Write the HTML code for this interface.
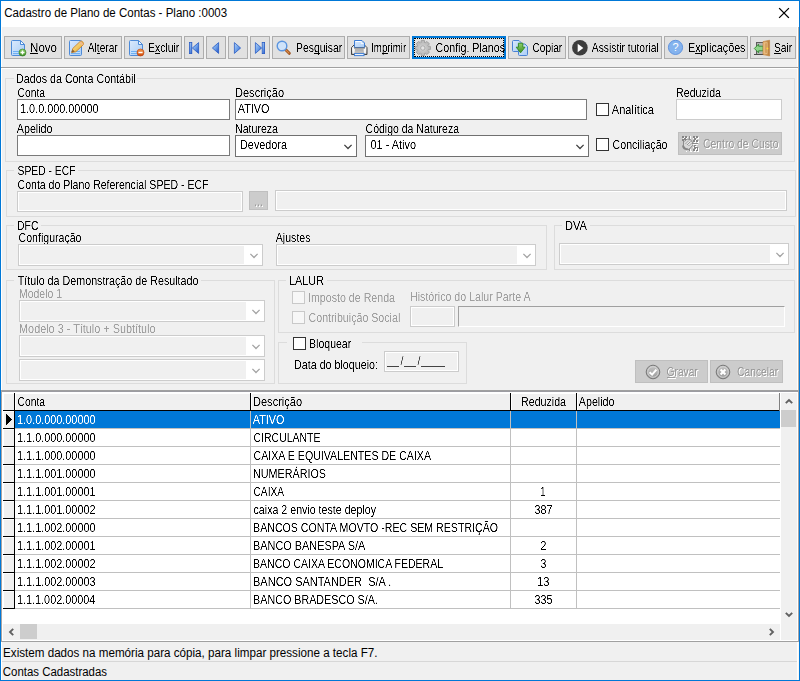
<!DOCTYPE html>
<html lang="pt-BR"><head><meta charset="utf-8"><title>Cadastro de Plano de Contas</title>
<style>
html,body{margin:0;padding:0;}
body{width:800px;height:681px;overflow:hidden;background:#f0f0f0;position:relative;font-family:"Liberation Sans",sans-serif;font-size:12px;}
.b{position:absolute;box-sizing:border-box;}
.t{position:absolute;white-space:pre;line-height:14px;transform-origin:0 0;display:block;filter:url(#crisp);}
.lcd{filter:none;}
.dis{color:#9c9c9c;text-shadow:1px 1px 0 #fff;}
u{text-decoration:underline;text-decoration-thickness:1px;text-underline-offset:1px;text-decoration-skip-ink:none;}
svg{position:absolute;overflow:visible;}
</style></head>
<body>
<svg width="0" height="0" style="position:absolute"><defs>
<linearGradient id="gPage" x1="0" y1="0" x2="1" y2="1"><stop offset="0" stop-color="#dbe9fc"/><stop offset="1" stop-color="#a9cdf6"/></linearGradient>
<linearGradient id="gNav" x1="0" y1="0" x2="1" y2="1"><stop offset="0" stop-color="#b4d2f6"/><stop offset="0.5" stop-color="#6fa2ea"/><stop offset="1" stop-color="#1a4cc4"/></linearGradient>
<linearGradient id="gGreen" x1="0" y1="0" x2="0" y2="1"><stop offset="0" stop-color="#8fd06a"/><stop offset="1" stop-color="#3f8f22"/></linearGradient>
<linearGradient id="gOrange" x1="0" y1="0" x2="0" y2="1"><stop offset="0" stop-color="#f59a4a"/><stop offset="1" stop-color="#d24a0a"/></linearGradient>
<linearGradient id="gPencil" x1="0" y1="0" x2="1" y2="1"><stop offset="0" stop-color="#fbe9a0"/><stop offset="1" stop-color="#e9a825"/></linearGradient>
<linearGradient id="gDoor" x1="0" y1="0" x2="1" y2="0"><stop offset="0" stop-color="#e9b777"/><stop offset="1" stop-color="#b87a36"/></linearGradient>
<linearGradient id="gHelp" x1="0" y1="0" x2="0" y2="1"><stop offset="0" stop-color="#a9cdf8"/><stop offset="1" stop-color="#5f9be8"/></linearGradient>
<linearGradient id="gPrn" x1="0" y1="0" x2="0" y2="1"><stop offset="0" stop-color="#f4f4f4"/><stop offset="0.6" stop-color="#dcdcdc"/><stop offset="1" stop-color="#9a9a9a"/></linearGradient>
<linearGradient id="gGear" x1="0" y1="0" x2="0" y2="1"><stop offset="0" stop-color="#d4d4d4"/><stop offset="1" stop-color="#9a9a9a"/></linearGradient>
<linearGradient id="gDis" x1="0" y1="0" x2="0" y2="1"><stop offset="0" stop-color="#c4c4c4"/><stop offset="1" stop-color="#9a9a9a"/></linearGradient>
<filter id="crisp" x="0" y="0" width="100%" height="100%" color-interpolation-filters="sRGB"><feComponentTransfer><feFuncA type="linear" slope="2" intercept="-0.5"/></feComponentTransfer></filter>
</defs></svg>
<div class="b" style="left:0px;top:0px;width:800px;height:681px;background:#f0f0f0;"></div>
<div class="b" style="left:0px;top:0px;width:800px;height:27px;background:#ffffff;"></div>
<div class="b" style="left:1px;top:27px;width:1px;height:653px;background:#ffffff;"></div>
<div class="b" style="left:797px;top:27px;width:1px;height:653px;background:#ffffff;"></div>
<div class="b" style="left:798px;top:27px;width:1px;height:363px;background:#b4aca4;"></div>
<div class="b" style="left:798px;top:642px;width:1px;height:38px;background:#fbf6f0;"></div>
<div class="b" style="left:0px;top:0px;width:800px;height:1px;background:#0078d7;"></div>
<div class="b" style="left:0px;top:0px;width:1px;height:681px;background:#0078d7;"></div>
<div class="b" style="left:799px;top:0px;width:1px;height:681px;background:#0078d7;"></div>
<div class="b" style="left:0px;top:680px;width:800px;height:1px;background:#0078d7;"></div>
<span class="t lcd" style="left:4px;top:6px;transform:translateX(0.3px) scaleX(0.9599);">Cadastro de Plano de Contas - Plano :0003</span>
<svg style="left:779px;top:8px" width="10" height="10" viewBox="0 0 10 10"><path d="M0.5 0.5 L9.5 9.5 M9.5 0.5 L0.5 9.5" stroke="#000" stroke-width="1.15" stroke-linecap="square" fill="none"/></svg>
<div class="b" style="left:4px;top:36px;width:58px;height:23px;background:#e1e1e1;border:1px solid #adadad;"></div>
<span class="t" style="left:30px;top:41px;transform:translateX(0.05px) scaleX(0.9625);">Novo</span>
<svg style="left:11px;top:40px" width="16" height="17" viewBox="0 0 16 17"><path d="M1.5 0.5 H9.5 L13.5 4.5 V14.5 Q13.5 15.5 12.5 15.5 H1.5 Q0.5 15.5 0.5 14.5 V1.5 Q0.5 0.5 1.5 0.5 Z" fill="url(#gPage)" stroke="#4d8ad8"/><path d="M9.5 0.5 V4.5 H13.5 Z" fill="#f4f9ff" stroke="#4d8ad8" stroke-linejoin="round"/><rect x="2" y="11" width="10" height="3" fill="#6fb0f2"/><rect x="2" y="12" width="10" height="1" fill="#bfe0ff"/><circle cx="11.5" cy="12.5" r="3.5" fill="url(#gGreen)" stroke="#2f7a1c" stroke-width="0.6"/><path d="M11.5 10.5 V14.5 M9.5 12.5 H13.5" stroke="#fff" stroke-width="1.4"/></svg>
<div class="b" style="left:64px;top:36px;width:58px;height:23px;background:#e1e1e1;border:1px solid #adadad;"></div>
<span class="t" style="left:87px;top:41px;transform:translateX(0.8px) scaleX(0.8471);">Alterar</span>
<svg style="left:69px;top:40px" width="16" height="17" viewBox="0 0 16 17"><path d="M1.5 0.5 H11.5 Q12.5 0.5 12.5 1.5 V14.5 Q12.5 15.5 11.5 15.5 H1.5 Q0.5 15.5 0.5 14.5 V1.5 Q0.5 0.5 1.5 0.5 Z" fill="url(#gPage)" stroke="#4d8ad8"/><rect x="2" y="11" width="9" height="3" fill="#6fb0f2"/><rect x="2" y="12" width="9" height="1" fill="#bfe0ff"/><path d="M2.6 12.6 L3.8 8.4 L11.2 1.4 Q12.8 0.6 14 2.2 Q15 3.8 14 5 L6.8 11.8 Z" fill="url(#gPencil)" stroke="#c8791e" stroke-width="0.8"/><path d="M11.3 2.2 L13.6 4.9" stroke="#f0b890" stroke-width="1.8"/><path d="M2.6 12.6 L3.6 9.4 L5.8 11.6 Z" fill="#8a5a2a"/></svg>
<div class="b" style="left:124px;top:36px;width:58px;height:23px;background:#e1e1e1;border:1px solid #adadad;"></div>
<span class="t" style="left:148px;top:41px;transform:translateX(0.05px) scaleX(0.8663);">Excluir</span>
<svg style="left:129px;top:40px" width="16" height="17" viewBox="0 0 16 17"><path d="M1.5 0.5 H9.5 L13.5 4.5 V14.5 Q13.5 15.5 12.5 15.5 H1.5 Q0.5 15.5 0.5 14.5 V1.5 Q0.5 0.5 1.5 0.5 Z" fill="url(#gPage)" stroke="#4d8ad8"/><path d="M9.5 0.5 V4.5 H13.5 Z" fill="#f4f9ff" stroke="#4d8ad8" stroke-linejoin="round"/><rect x="2" y="11" width="10" height="3" fill="#6fb0f2"/><rect x="2" y="12" width="10" height="1" fill="#bfe0ff"/><circle cx="11.5" cy="12.5" r="3.5" fill="url(#gOrange)" stroke="#b83c06" stroke-width="0.6"/><path d="M9.4 12.5 H13.6" stroke="#fff" stroke-width="1.5"/></svg>
<div class="b" style="left:184px;top:36px;width:20px;height:23px;background:#e1e1e1;border:1px solid #adadad;"></div>
<svg style="left:189px;top:42px" width="11" height="12" viewBox="0 0 11 12"><rect x="0.4" y="0.4" width="2.4" height="11.2" fill="url(#gNav)" stroke="#2a5cc4" stroke-width="0.8"/><path d="M9.6 0.6 V11.4 L3.4 6 Z" fill="url(#gNav)" stroke="#2a5cc4" stroke-width="0.8" stroke-linejoin="round"/></svg>
<div class="b" style="left:206px;top:36px;width:20px;height:23px;background:#e1e1e1;border:1px solid #adadad;"></div>
<svg style="left:212px;top:42px" width="8" height="12" viewBox="0 0 8 12"><path d="M6.6 0.6 V11.4 L0.4 6 Z" fill="url(#gNav)" stroke="#2a5cc4" stroke-width="0.8" stroke-linejoin="round"/></svg>
<div class="b" style="left:228px;top:36px;width:20px;height:23px;background:#e1e1e1;border:1px solid #adadad;"></div>
<svg style="left:234px;top:42px" width="8" height="12" viewBox="0 0 8 12"><path d="M0.4 0.6 V11.4 L6.6 6 Z" fill="url(#gNav)" stroke="#2a5cc4" stroke-width="0.8" stroke-linejoin="round"/></svg>
<div class="b" style="left:250px;top:36px;width:20px;height:23px;background:#e1e1e1;border:1px solid #adadad;"></div>
<svg style="left:255px;top:42px" width="11" height="12" viewBox="0 0 11 12"><rect x="7.2" y="0.4" width="2.4" height="11.2" fill="url(#gNav)" stroke="#2a5cc4" stroke-width="0.8"/><path d="M0.4 0.6 V11.4 L6.6 6 Z" fill="url(#gNav)" stroke="#2a5cc4" stroke-width="0.8" stroke-linejoin="round"/></svg>
<div class="b" style="left:272px;top:36px;width:73px;height:23px;background:#e1e1e1;border:1px solid #adadad;"></div>
<span class="t" style="left:296px;top:41px;transform:translateX(0.05px) scaleX(0.8656);">Pesquisar</span>
<svg style="left:276px;top:40px" width="16" height="16" viewBox="0 0 16 16"><path d="M9.5 9.5 L13.3 13.3" stroke="#9a4f1a" stroke-width="3" stroke-linecap="round"/><path d="M9.8 9.8 L13 13" stroke="#d98a4a" stroke-width="1.2" stroke-linecap="round"/><circle cx="6" cy="6" r="4.8" fill="#cfe3fa" stroke="#5b95e0" stroke-width="1.4"/></svg>
<div class="b" style="left:347px;top:36px;width:63px;height:23px;background:#e1e1e1;border:1px solid #adadad;"></div>
<span class="t" style="left:371px;top:41px;transform:translateX(0.05px) scaleX(0.8124);">Imprimir</span>
<svg style="left:351px;top:40px" width="17" height="17" viewBox="0 0 17 17"><path d="M0.5 14.5 V7.6 L3.2 4.8 H13.3 L16 7.6 V14.5 Z" fill="url(#gPrn)" stroke="#444" stroke-width="1"/><rect x="1.5" y="8" width="2" height="5.5" fill="#fff" opacity="0.8"/><rect x="13" y="8" width="2" height="5.5" fill="#fff" opacity="0.8"/><rect x="4" y="9" width="8.5" height="2.6" fill="#b4b4b4"/><path d="M3.5 7.5 V0.5 H11 L13.5 3 V7.5 Z" fill="url(#gPage)" stroke="#3f7fd6"/><path d="M4.5 1.5 H10.2 V3.6 H12.5" fill="none" stroke="#fff" stroke-width="0.9"/><rect x="3" y="7.5" width="11" height="1" fill="#666"/><rect x="3.5" y="13.6" width="9.5" height="2" fill="#fff" stroke="#3f7fd6"/></svg>
<div class="b" style="left:412px;top:36px;width:94px;height:23px;background:#e1e1e1;border:2px solid #0078d7;"></div>
<div class="b" style="left:414px;top:38px;width:90px;height:19px;border:1px dotted #000;"></div>
<span class="t" style="left:435px;top:41px;transform:translateX(0.55px) scaleX(0.8898);">Config. Planos</span>
<svg style="left:415px;top:40px" width="16" height="16" viewBox="0 0 16 16"><g transform="translate(7.8 8)"><rect x="-1.8" y="-7.6" width="3.6" height="4" rx="0.5" transform="rotate(0)" fill="#bcbcbc" stroke="#8e8e8e" stroke-width="0.7"/><rect x="-1.8" y="-7.6" width="3.6" height="4" rx="0.5" transform="rotate(45)" fill="#bcbcbc" stroke="#8e8e8e" stroke-width="0.7"/><rect x="-1.8" y="-7.6" width="3.6" height="4" rx="0.5" transform="rotate(90)" fill="#bcbcbc" stroke="#8e8e8e" stroke-width="0.7"/><rect x="-1.8" y="-7.6" width="3.6" height="4" rx="0.5" transform="rotate(135)" fill="#bcbcbc" stroke="#8e8e8e" stroke-width="0.7"/><rect x="-1.8" y="-7.6" width="3.6" height="4" rx="0.5" transform="rotate(180)" fill="#bcbcbc" stroke="#8e8e8e" stroke-width="0.7"/><rect x="-1.8" y="-7.6" width="3.6" height="4" rx="0.5" transform="rotate(225)" fill="#bcbcbc" stroke="#8e8e8e" stroke-width="0.7"/><rect x="-1.8" y="-7.6" width="3.6" height="4" rx="0.5" transform="rotate(270)" fill="#bcbcbc" stroke="#8e8e8e" stroke-width="0.7"/><rect x="-1.8" y="-7.6" width="3.6" height="4" rx="0.5" transform="rotate(315)" fill="#bcbcbc" stroke="#8e8e8e" stroke-width="0.7"/><circle r="5.4" fill="#c2c2c2"/><circle r="3.6" fill="#cdcdcd"/><circle r="2.2" fill="#e4e4e4" stroke="#a0a0a0" stroke-width="0.8"/></g></svg>
<div class="b" style="left:508px;top:36px;width:58px;height:23px;background:#e1e1e1;border:1px solid #adadad;"></div>
<span class="t" style="left:532px;top:41px;transform:translateX(0.55px) scaleX(0.8396);">Copiar</span>
<svg style="left:512px;top:40px" width="17" height="17" viewBox="0 0 17 17"><path d="M1.5 0.5 H7 L9.5 3 V11.5 H1.5 Q0.5 11.5 0.5 10.5 V1.5 Q0.5 0.5 1.5 0.5 Z" fill="url(#gPage)" stroke="#4a82d4"/><path d="M7.5 4 H13 L15.5 6.5 V14.5 Q15.5 15.5 14.5 15.5 H7.5 Q6.5 15.5 6.5 14.5 V5 Q6.5 4 7.5 4 Z" fill="url(#gPage)" stroke="#4a82d4"/><path d="M6.4 3.2 H10.8 V7.2 H13 L8.6 12.8 L4.2 7.2 H6.4 Z" fill="url(#gGreen)" stroke="#2f8a1c" stroke-width="0.9" stroke-linejoin="round"/></svg>
<div class="b" style="left:568px;top:36px;width:94px;height:23px;background:#e1e1e1;border:1px solid #adadad;"></div>
<span class="t" style="left:591px;top:41px;transform:translateX(0.8px) scaleX(0.8579);">Assistir tutorial</span>
<svg style="left:572px;top:40px" width="16" height="16" viewBox="0 0 16 16"><circle cx="7.9" cy="7.8" r="7.8" fill="#3c3c3c"/><path d="M5.7 3.8 V12.2 L11.3 8 Z" fill="#fff"/></svg>
<div class="b" style="left:664px;top:36px;width:84px;height:23px;background:#e1e1e1;border:1px solid #adadad;"></div>
<span class="t" style="left:688px;top:41px;transform:translateX(0.05px) scaleX(0.8973);">Explicações</span>
<svg style="left:668px;top:40px" width="16" height="16" viewBox="0 0 16 16"><circle cx="7.5" cy="7.4" r="7.1" fill="#84b3ee" stroke="#5a8edc" stroke-width="0.9"/><text x="7.5" y="11.4" text-anchor="middle" font-family="Liberation Sans,sans-serif" font-size="11" fill="#fff">?</text></svg>
<div class="b" style="left:750px;top:36px;width:46px;height:23px;background:#e1e1e1;border:1px solid #adadad;"></div>
<span class="t" style="left:774px;top:41px;transform:translateX(0.05px) scaleX(0.8518);">Sair</span>
<svg style="left:754px;top:40px" width="17" height="17" viewBox="0 0 17 17"><rect x="2.5" y="2.5" width="7" height="12" fill="#b4b4b4" stroke="#5c5c5c"/><rect x="0" y="14" width="9.5" height="1" fill="#4a4a4a"/><path d="M0.3 8.5 L4.6 4.2 V6.2 H9.2 V10.8 H4.6 V12.8 Z" fill="#8fd48a" stroke="#2e8b2e" stroke-width="0.9" stroke-linejoin="round"/><path d="M9 1.6 L15.6 0.2 V16 L9 14.6 Z" fill="url(#gDoor)" stroke="#c0823c" stroke-width="0.6"/><path d="M10.2 3 L13.2 2.5 V13.6 L10.2 13.2 Z" fill="none" stroke="#f2cf9a" stroke-width="0.6"/><circle cx="13.4" cy="8.5" r="0.9" fill="#ffd83a"/></svg>
<div class="b" style="left:30px;top:53px;width:8px;height:1px;background:#000;"></div>
<div class="b" style="left:97px;top:53px;width:3px;height:1px;background:#000;"></div>
<div class="b" style="left:155px;top:53px;width:5px;height:1px;background:#000;"></div>
<div class="b" style="left:314px;top:53px;width:6px;height:1px;background:#000;"></div>
<div class="b" style="left:382px;top:53px;width:6px;height:1px;background:#000;"></div>
<div class="b" style="left:695px;top:53px;width:6px;height:1px;background:#000;"></div>
<div class="b" style="left:774px;top:53px;width:7px;height:1px;background:#000;"></div>
<div class="b" style="left:1px;top:67px;width:797px;height:1px;background:#a0a0a0;"></div>
<div class="b" style="left:2px;top:68px;width:795px;height:1px;background:#ffffff;"></div>
<div class="b" style="left:5px;top:78px;width:790px;height:84px;border:1px solid #dcdcdc;"></div>
<div class="b" style="left:14px;top:78px;width:123px;height:1px;background:#f0f0f0;"></div>
<span class="t" style="left:16px;top:72px;transform:translateX(0.05px) scaleX(0.8927);">Dados da Conta Contábil</span>
<span class="t" style="left:17px;top:86px;transform:translateX(0.55px) scaleX(0.8566);">Conta</span>
<div class="b" style="left:17px;top:99px;width:213px;height:21px;background:#fff;border:1px solid #7a7a7a;"></div>
<span class="t" style="left:20px;top:102px;transform:translateX(0.05px) scaleX(0.9044);">1.0.0.000.00000</span>
<span class="t" style="left:235px;top:86px;transform:translateX(0.05px) scaleX(0.9175);">Descrição</span>
<div class="b" style="left:235px;top:99px;width:352px;height:21px;background:#fff;border:1px solid #7a7a7a;"></div>
<span class="t" style="left:237px;top:102px;transform:translateX(0.8px) scaleX(0.9022);">ATIVO</span>
<div class="b" style="left:596px;top:103px;width:13px;height:13px;background:#fff;border:1px solid #333;"></div>
<span class="t" style="left:611px;top:103px;transform:translateX(0.8px) scaleX(0.9167);">Analítica</span>
<span class="t" style="left:676px;top:86px;transform:translateX(0.05px) scaleX(0.8864);">Reduzida</span>
<div class="b" style="left:676px;top:99px;width:106px;height:21px;background:#fff;border:1px solid #cccccc;"></div>
<span class="t" style="left:16px;top:122px;transform:translateX(0.8px) scaleX(0.8916);">Apelido</span>
<div class="b" style="left:17px;top:135px;width:213px;height:21px;background:#fff;border:1px solid #7a7a7a;"></div>
<span class="t" style="left:235px;top:122px;transform:translateX(0.05px) scaleX(0.8818);">Natureza</span>
<div class="b" style="left:235px;top:135px;width:122px;height:22px;background:#fff;border:1px solid #707070;"></div>
<svg style="left:344px;top:144px" width="8" height="6" viewBox="0 0 8 6"><path d="M0.4 0.9 L4 4.5 L7.6 0.9" stroke="#404040" stroke-width="1.3" fill="none"/></svg>
<span class="t" style="left:240px;top:138px;transform:translateX(0.05px) scaleX(0.9022);">Devedora</span>
<span class="t" style="left:365px;top:122px;transform:translateX(0.55px) scaleX(0.8755);">Código da Natureza</span>
<div class="b" style="left:365px;top:135px;width:224px;height:22px;background:#fff;border:1px solid #707070;"></div>
<svg style="left:576px;top:144px" width="8" height="6" viewBox="0 0 8 6"><path d="M0.4 0.9 L4 4.5 L7.6 0.9" stroke="#404040" stroke-width="1.3" fill="none"/></svg>
<span class="t" style="left:370px;top:138px;transform:translateX(0.55px) scaleX(0.9083);">01 - Ativo</span>
<div class="b" style="left:596px;top:138px;width:13px;height:13px;background:#fff;border:1px solid #333;"></div>
<span class="t" style="left:612px;top:138px;transform:translateX(0.55px) scaleX(0.8856);">Conciliação</span>
<div class="b" style="left:678px;top:132px;width:104px;height:23px;background:#cccccc;border:1px solid #bfbfbf;"></div>
<svg style="left:682px;top:136px" width="16" height="16" viewBox="0 0 16 16"><rect x="1" y="1" width="2" height="2" fill="#ffffff"/><rect x="0" y="0" width="2" height="2" fill="#858585"/><rect x="4" y="1" width="2" height="2" fill="#ffffff"/><rect x="3" y="0" width="2" height="2" fill="#858585"/><rect x="1" y="4" width="2" height="2" fill="#ffffff"/><rect x="0" y="3" width="2" height="2" fill="#858585"/><rect x="3" y="3" width="2" height="2" fill="#ffffff"/><rect x="2" y="2" width="2" height="2" fill="#858585"/><rect x="12" y="1" width="2" height="2" fill="#ffffff"/><rect x="11" y="0" width="2" height="2" fill="#858585"/><rect x="15" y="1" width="2" height="2" fill="#ffffff"/><rect x="14" y="0" width="2" height="2" fill="#858585"/><rect x="13" y="3" width="2" height="2" fill="#ffffff"/><rect x="12" y="2" width="2" height="2" fill="#858585"/><rect x="15" y="5" width="2" height="2" fill="#ffffff"/><rect x="14" y="4" width="2" height="2" fill="#858585"/><rect x="12" y="5" width="2" height="2" fill="#ffffff"/><rect x="11" y="4" width="2" height="2" fill="#858585"/><rect x="13" y="10" width="2" height="2" fill="#ffffff"/><rect x="12" y="9" width="2" height="2" fill="#858585"/><rect x="15" y="12" width="2" height="2" fill="#ffffff"/><rect x="14" y="11" width="2" height="2" fill="#858585"/><rect x="12" y="14" width="2" height="2" fill="#ffffff"/><rect x="11" y="13" width="2" height="2" fill="#858585"/><rect x="15" y="14" width="2" height="2" fill="#ffffff"/><rect x="14" y="13" width="2" height="2" fill="#858585"/><rect x="13" y="12" width="2" height="2" fill="#ffffff"/><rect x="12" y="11" width="2" height="2" fill="#858585"/><rect x="2" y="1" width="1" height="1" fill="#ffffff"/><rect x="5" y="1" width="1" height="1" fill="#ffffff"/><rect x="13" y="1" width="1" height="1" fill="#ffffff"/><rect x="13" y="5" width="1" height="1" fill="#ffffff"/><rect x="11" y="2" width="1" height="1" fill="#ffffff"/><rect x="13" y="10" width="1" height="1" fill="#ffffff"/><rect x="11" y="11" width="1" height="1" fill="#ffffff"/><rect x="13" y="14" width="1" height="1" fill="#ffffff"/><rect x="4" y="15" width="1" height="1" fill="#ffffff"/><rect x="9" y="15" width="1" height="1" fill="#ffffff"/><path d="M1.5 5 V10 L4 13.5 H7 L10.5 9.5 V6.5 L8.5 3.5 L5 3 L3 5 Z" fill="#d8d8d8" stroke="#858585" stroke-width="0.9"/><path d="M3.5 8 L7 4.5 M5 9 L8.5 5.5 M6.5 10 L9.5 7" stroke="#858585" stroke-width="0.8"/><path d="M4 7 L6.5 4.5 M5.8 8.2 L8.2 5.8" stroke="#fff" stroke-width="0.8" transform="translate(0.8 0.8)"/><path d="M0 9.5 Q0.5 14 5 14 L6.5 12.5 Q3 12.5 1.5 9.5 Z" fill="#858585"/><path d="M10.5 7.5 H16" stroke="#858585" stroke-width="0.9"/><path d="M10.5 8.5 H16" stroke="#fff" stroke-width="0.9"/><path d="M7.5 0 V3.5 M7.5 12.5 V15" stroke="#858585" stroke-width="0.9"/><path d="M8.5 0 V3 M8.5 13 V16" stroke="#fff" stroke-width="0.9"/></svg>
<span class="t dis" style="left:703px;top:137px;transform:translateX(0.05px) scaleX(0.8633);">Centro de Custo</span>
<div class="b" style="left:6px;top:170px;width:790px;height:47px;border:1px solid #dcdcdc;"></div>
<div class="b" style="left:14px;top:170px;width:64px;height:1px;background:#f0f0f0;"></div>
<span class="t" style="left:17px;top:164px;transform:translateX(0.55px) scaleX(0.8604);">SPED - ECF</span>
<span class="t" style="left:17px;top:178px;transform:translateX(0.55px) scaleX(0.8782);">Conta do Plano Referencial SPED - ECF</span>
<div class="b" style="left:17px;top:191px;width:226px;height:21px;background:#f0f0f0;border:1px solid #cccccc;"></div>
<div class="b" style="left:18px;top:192px;width:224px;height:19px;border:1px solid #ffffff;"></div>
<div class="b" style="left:249px;top:191px;width:19px;height:19px;background:#cccccc;border:1px solid #bfbfbf;"></div>
<span class="t dis" style="left:254px;top:195px;transform:translateX(0.05px) scaleX(0.8853);">...</span>
<div class="b" style="left:275px;top:190px;width:512px;height:21px;background:#f0f0f0;border:1px solid #cccccc;"></div>
<div class="b" style="left:276px;top:191px;width:510px;height:19px;border:1px solid #ffffff;"></div>
<div class="b" style="left:6px;top:225px;width:541px;height:45px;border:1px solid #dcdcdc;"></div>
<div class="b" style="left:14px;top:225px;width:27px;height:1px;background:#f0f0f0;"></div>
<span class="t" style="left:17px;top:219px;transform:translateX(0.05px) scaleX(0.8702);">DFC</span>
<span class="t" style="left:18px;top:231px;transform:translateX(0.55px) scaleX(0.8817);">Configuração</span>
<div class="b" style="left:18px;top:244px;width:245px;height:22px;background:#f0f0f0;border:1px solid #cccccc;"></div>
<div class="b" style="left:19px;top:245px;width:243px;height:20px;border:1px solid #ffffff;"></div>
<div class="b" style="left:244px;top:245px;width:18px;height:20px;background:#ffffff;"></div>
<svg style="left:250px;top:253px" width="8" height="6" viewBox="0 0 8 6"><path d="M0.4 0.9 L4 4.5 L7.6 0.9" stroke="#a4a4a4" stroke-width="1.3" fill="none"/></svg>
<span class="t" style="left:275px;top:231px;transform:translateX(0.8px) scaleX(0.8814);">Ajustes</span>
<div class="b" style="left:276px;top:244px;width:260px;height:22px;background:#f0f0f0;border:1px solid #cccccc;"></div>
<div class="b" style="left:277px;top:245px;width:258px;height:20px;border:1px solid #ffffff;"></div>
<div class="b" style="left:517px;top:245px;width:18px;height:20px;background:#ffffff;"></div>
<svg style="left:523px;top:253px" width="8" height="6" viewBox="0 0 8 6"><path d="M0.4 0.9 L4 4.5 L7.6 0.9" stroke="#a4a4a4" stroke-width="1.3" fill="none"/></svg>
<div class="b" style="left:554px;top:225px;width:241px;height:45px;border:1px solid #dcdcdc;"></div>
<div class="b" style="left:562px;top:225px;width:28px;height:1px;background:#f0f0f0;"></div>
<span class="t" style="left:565px;top:219px;transform:translateX(0.05px) scaleX(0.9219);">DVA</span>
<div class="b" style="left:559px;top:243px;width:230px;height:22px;background:#f0f0f0;border:1px solid #cccccc;"></div>
<div class="b" style="left:560px;top:244px;width:228px;height:20px;border:1px solid #ffffff;"></div>
<div class="b" style="left:770px;top:244px;width:18px;height:20px;background:#ffffff;"></div>
<svg style="left:776px;top:252px" width="8" height="6" viewBox="0 0 8 6"><path d="M0.4 0.9 L4 4.5 L7.6 0.9" stroke="#a4a4a4" stroke-width="1.3" fill="none"/></svg>
<div class="b" style="left:6px;top:280px;width:269px;height:104px;border:1px solid #dcdcdc;"></div>
<div class="b" style="left:14px;top:280px;width:187px;height:1px;background:#f0f0f0;"></div>
<span class="t" style="left:17px;top:274px;transform:translateX(0.8px) scaleX(0.8940);">Título da Demonstração de Resultado</span>
<span class="t" style="left:19px;top:287px;color:#a0a0a0;transform:translateX(0.05px) scaleX(0.8701);">Modelo 1</span>
<div class="b" style="left:19px;top:300px;width:246px;height:22px;background:#f0f0f0;border:1px solid #cccccc;"></div>
<div class="b" style="left:20px;top:301px;width:244px;height:20px;border:1px solid #ffffff;"></div>
<div class="b" style="left:246px;top:301px;width:18px;height:20px;background:#ffffff;"></div>
<svg style="left:252px;top:309px" width="8" height="6" viewBox="0 0 8 6"><path d="M0.4 0.9 L4 4.5 L7.6 0.9" stroke="#a4a4a4" stroke-width="1.3" fill="none"/></svg>
<span class="t" style="left:19px;top:322px;color:#a0a0a0;transform:translateX(0.05px) scaleX(0.9044);">Modelo 3 - Título + Subtítulo</span>
<div class="b" style="left:19px;top:335px;width:246px;height:22px;background:#f0f0f0;border:1px solid #cccccc;"></div>
<div class="b" style="left:20px;top:336px;width:244px;height:20px;border:1px solid #ffffff;"></div>
<div class="b" style="left:246px;top:336px;width:18px;height:20px;background:#ffffff;"></div>
<svg style="left:252px;top:344px" width="8" height="6" viewBox="0 0 8 6"><path d="M0.4 0.9 L4 4.5 L7.6 0.9" stroke="#a4a4a4" stroke-width="1.3" fill="none"/></svg>
<div class="b" style="left:19px;top:359px;width:246px;height:22px;background:#f0f0f0;border:1px solid #cccccc;"></div>
<div class="b" style="left:20px;top:360px;width:244px;height:20px;border:1px solid #ffffff;"></div>
<div class="b" style="left:246px;top:360px;width:18px;height:20px;background:#ffffff;"></div>
<svg style="left:252px;top:368px" width="8" height="6" viewBox="0 0 8 6"><path d="M0.4 0.9 L4 4.5 L7.6 0.9" stroke="#a4a4a4" stroke-width="1.3" fill="none"/></svg>
<div class="b" style="left:278px;top:280px;width:517px;height:53px;border:1px solid #dcdcdc;"></div>
<div class="b" style="left:286px;top:280px;width:41px;height:1px;background:#f0f0f0;"></div>
<span class="t" style="left:289px;top:274px;transform:translateX(0.05px) scaleX(0.9037);">LALUR</span>
<div class="b" style="left:292px;top:291px;width:13px;height:13px;background:#f7f7f7;border:1px solid #c9c9c9;"></div>
<span class="t" style="left:308px;top:291px;color:#a0a0a0;transform:translateX(0.05px) scaleX(0.8867);">Imposto de Renda</span>
<div class="b" style="left:292px;top:311px;width:13px;height:13px;background:#f7f7f7;border:1px solid #c9c9c9;"></div>
<span class="t" style="left:308px;top:311px;color:#a0a0a0;transform:translateX(0.55px) scaleX(0.8869);">Contribuição Social</span>
<span class="t" style="left:410px;top:290px;color:#a0a0a0;transform:translateX(0.05px) scaleX(0.8851);">Histórico do Lalur Parte A</span>
<div class="b" style="left:410px;top:306px;width:45px;height:21px;background:#f0f0f0;border:1px solid #cccccc;"></div>
<div class="b" style="left:411px;top:307px;width:43px;height:19px;border:1px solid #ffffff;"></div>
<div class="b" style="left:458px;top:306px;width:327px;height:21px;background:#f0f0f0;border:1px solid #a0a0a0;border-right-color:#fff;border-bottom-color:#fff;"></div>
<div class="b" style="left:278px;top:342px;width:189px;height:42px;border:1px solid #dcdcdc;"></div>
<div class="b" style="left:287px;top:342px;width:75px;height:1px;background:#f0f0f0;"></div>
<div class="b" style="left:293px;top:337px;width:13px;height:13px;background:#fff;border:1px solid #333;"></div>
<span class="t" style="left:309px;top:337px;transform:translateX(0.05px) scaleX(0.8783);">Bloquear</span>
<span class="t" style="left:294px;top:358px;transform:translateX(0.05px) scaleX(0.8925);">Data do bloqueio:</span>
<div class="b" style="left:384px;top:351px;width:75px;height:21px;background:#f0f0f0;border:1px solid #cccccc;"></div>
<div class="b" style="left:385px;top:352px;width:73px;height:19px;border:1px solid #ffffff;"></div>
<span class="t" style="left:387px;top:353px;color:#444;transform:scaleX(0.8994);">__<span style="position:relative;top:1px;margin:0 0.6px 0 1.6px">/</span>__<span style="position:relative;top:1px;margin:0 0.6px 0 1.6px">/</span>____</span>
<div class="b" style="left:635px;top:360px;width:73px;height:23px;background:#cccccc;border:1px solid #bfbfbf;"></div>
<svg style="left:645px;top:364px" width="16" height="16" viewBox="0 0 16 16"><circle cx="8" cy="8" r="6.8" fill="url(#gDis)" stroke="#787878" stroke-width="1"/><circle cx="8" cy="8" r="5.3" fill="none" stroke="#dadada" stroke-width="0.8"/><path d="M4.6 8.2 L7.1 10.6 L11.4 5.6" stroke="#fff" stroke-width="2" fill="none"/></svg>
<div class="b" style="left:668px;top:378px;width:8px;height:1px;background:#ffffff;"></div>
<div class="b" style="left:667px;top:377px;width:8px;height:1px;background:#9c9c9c;"></div>
<span class="t dis" style="left:666px;top:365px;transform:translateX(0.55px) scaleX(0.8501);">Gravar</span>
<div class="b" style="left:710px;top:360px;width:73px;height:23px;background:#cccccc;border:1px solid #bfbfbf;"></div>
<svg style="left:715px;top:364px" width="16" height="16" viewBox="0 0 16 16"><circle cx="8" cy="8" r="6.8" fill="url(#gDis)" stroke="#787878" stroke-width="1"/><circle cx="8" cy="8" r="5.3" fill="none" stroke="#dadada" stroke-width="0.8"/><path d="M5.6 5.6 L10.4 10.4 M10.4 5.6 L5.6 10.4" stroke="#fff" stroke-width="2.1" fill="none"/></svg>
<span class="t dis" style="left:737px;top:365px;transform:translateX(0.05px) scaleX(0.8576);">Cancelar</span>
<div class="b" style="left:1px;top:390px;width:797px;height:1px;background:#a0a0a0;"></div>
<div class="b" style="left:1px;top:391px;width:798px;height:251px;background:#9c9ca2;"></div>
<div class="b" style="left:1px;top:390px;width:1px;height:252px;background:#aaa4a2;"></div>
<div class="b" style="left:798px;top:390px;width:1px;height:252px;background:#aaa4a2;"></div>
<div class="b" style="left:2px;top:392px;width:796px;height:249px;background:#ffffff;"></div>
<div class="b" style="left:3px;top:393px;width:777px;height:17px;background:#f0f0f0;"></div>
<div class="b" style="left:3px;top:393px;width:777px;height:1px;background:#ffffff;"></div>
<div class="b" style="left:3px;top:393px;width:1px;height:17px;background:#ffffff;"></div>
<div class="b" style="left:15px;top:393px;width:1px;height:17px;background:#ffffff;"></div>
<div class="b" style="left:251px;top:393px;width:1px;height:17px;background:#ffffff;"></div>
<div class="b" style="left:511px;top:393px;width:1px;height:17px;background:#ffffff;"></div>
<div class="b" style="left:577px;top:393px;width:1px;height:17px;background:#ffffff;"></div>
<div class="b" style="left:3px;top:410px;width:777px;height:1px;background:#000;"></div>
<div class="b" style="left:14px;top:393px;width:1px;height:18px;background:#000;"></div>
<div class="b" style="left:250px;top:393px;width:1px;height:18px;background:#000;"></div>
<div class="b" style="left:510px;top:393px;width:1px;height:18px;background:#000;"></div>
<div class="b" style="left:576px;top:393px;width:1px;height:18px;background:#000;"></div>
<div class="b" style="left:779px;top:393px;width:1px;height:18px;background:#808080;"></div>
<span class="t" style="left:17px;top:395px;transform:translateX(0.55px) scaleX(0.8566);">Conta</span>
<span class="t" style="left:253px;top:395px;transform:translateX(0.05px) scaleX(0.9175);">Descrição</span>
<span class="t" style="left:521px;top:395px;transform:translateX(0.05px) scaleX(0.8864);">Reduzida</span>
<span class="t" style="left:578px;top:395px;transform:translateX(0.8px) scaleX(0.8916);">Apelido</span>
<div class="b" style="left:3px;top:411px;width:11px;height:17px;background:#f0f0f0;border-top:1px solid #fff;border-left:1px solid #fff;"></div>
<div class="b" style="left:3px;top:428px;width:12px;height:1px;background:#000;"></div>
<div class="b" style="left:14px;top:411px;width:1px;height:18px;background:#000;"></div>
<div class="b" style="left:15px;top:411px;width:765px;height:17px;background:#0078d7;"></div>
<svg style="left:6px;top:414px" width="6" height="11" viewBox="0 0 6 11"><path d="M0 0 L6 5.5 L0 11 Z" fill="#000" shape-rendering="crispEdges"/></svg>
<div class="b" style="left:15px;top:428px;width:765px;height:1px;background:#c0c0c0;"></div>
<span class="t" style="left:17px;top:413px;color:#fff;transform:translateX(0.05px) scaleX(0.9044);">1.0.0.000.00000</span>
<span class="t" style="left:252px;top:413px;color:#fff;transform:translateX(0.8px) scaleX(0.9022);">ATIVO</span>
<div class="b" style="left:3px;top:429px;width:11px;height:17px;background:#f0f0f0;border-top:1px solid #fff;border-left:1px solid #fff;"></div>
<div class="b" style="left:3px;top:446px;width:12px;height:1px;background:#000;"></div>
<div class="b" style="left:14px;top:429px;width:1px;height:18px;background:#000;"></div>
<div class="b" style="left:15px;top:446px;width:765px;height:1px;background:#c0c0c0;"></div>
<span class="t" style="left:17px;top:431px;color:#000;transform:translateX(0.05px) scaleX(0.9044);">1.1.0.000.00000</span>
<span class="t" style="left:253px;top:431px;color:#000;transform:translateX(0.55px) scaleX(0.8730);">CIRCULANTE</span>
<div class="b" style="left:3px;top:447px;width:11px;height:17px;background:#f0f0f0;border-top:1px solid #fff;border-left:1px solid #fff;"></div>
<div class="b" style="left:3px;top:464px;width:12px;height:1px;background:#000;"></div>
<div class="b" style="left:14px;top:447px;width:1px;height:18px;background:#000;"></div>
<div class="b" style="left:15px;top:464px;width:765px;height:1px;background:#c0c0c0;"></div>
<span class="t" style="left:17px;top:449px;color:#000;transform:translateX(0.05px) scaleX(0.9044);">1.1.1.000.00000</span>
<span class="t" style="left:253px;top:449px;color:#000;transform:translateX(0.55px) scaleX(0.8850);">CAIXA E EQUIVALENTES DE CAIXA</span>
<div class="b" style="left:3px;top:465px;width:11px;height:17px;background:#f0f0f0;border-top:1px solid #fff;border-left:1px solid #fff;"></div>
<div class="b" style="left:3px;top:482px;width:12px;height:1px;background:#000;"></div>
<div class="b" style="left:14px;top:465px;width:1px;height:18px;background:#000;"></div>
<div class="b" style="left:15px;top:482px;width:765px;height:1px;background:#c0c0c0;"></div>
<span class="t" style="left:17px;top:467px;color:#000;transform:translateX(0.05px) scaleX(0.9044);">1.1.1.001.00000</span>
<span class="t" style="left:253px;top:467px;color:#000;transform:translateX(0.05px) scaleX(0.8969);">NUMERÁRIOS</span>
<div class="b" style="left:3px;top:483px;width:11px;height:17px;background:#f0f0f0;border-top:1px solid #fff;border-left:1px solid #fff;"></div>
<div class="b" style="left:3px;top:500px;width:12px;height:1px;background:#000;"></div>
<div class="b" style="left:14px;top:483px;width:1px;height:18px;background:#000;"></div>
<div class="b" style="left:15px;top:500px;width:765px;height:1px;background:#c0c0c0;"></div>
<span class="t" style="left:17px;top:485px;color:#000;transform:translateX(0.05px) scaleX(0.9044);">1.1.1.001.00001</span>
<span class="t" style="left:253px;top:485px;color:#000;transform:translateX(0.55px) scaleX(0.8452);">CAIXA</span>
<span class="t" style="left:540px;top:485px;color:#000;transform:translateX(0.3px) scaleX(0.7776);">1</span>
<div class="b" style="left:3px;top:501px;width:11px;height:17px;background:#f0f0f0;border-top:1px solid #fff;border-left:1px solid #fff;"></div>
<div class="b" style="left:3px;top:518px;width:12px;height:1px;background:#000;"></div>
<div class="b" style="left:14px;top:501px;width:1px;height:18px;background:#000;"></div>
<div class="b" style="left:15px;top:518px;width:765px;height:1px;background:#c0c0c0;"></div>
<span class="t" style="left:17px;top:503px;color:#000;transform:translateX(0.05px) scaleX(0.9044);">1.1.1.001.00002</span>
<span class="t" style="left:253px;top:503px;color:#000;transform:translateX(0.55px) scaleX(0.8867);">caixa 2 envio teste deploy</span>
<span class="t" style="left:534px;top:503px;color:#000;transform:translateX(0.55px) scaleX(0.8954);">387</span>
<div class="b" style="left:3px;top:519px;width:11px;height:17px;background:#f0f0f0;border-top:1px solid #fff;border-left:1px solid #fff;"></div>
<div class="b" style="left:3px;top:536px;width:12px;height:1px;background:#000;"></div>
<div class="b" style="left:14px;top:519px;width:1px;height:18px;background:#000;"></div>
<div class="b" style="left:15px;top:536px;width:765px;height:1px;background:#c0c0c0;"></div>
<span class="t" style="left:17px;top:521px;color:#000;transform:translateX(0.05px) scaleX(0.9044);">1.1.1.002.00000</span>
<span class="t" style="left:253px;top:521px;color:#000;transform:translateX(0.05px) scaleX(0.8846);">BANCOS CONTA MOVTO -REC SEM RESTRIÇÃO</span>
<div class="b" style="left:3px;top:537px;width:11px;height:17px;background:#f0f0f0;border-top:1px solid #fff;border-left:1px solid #fff;"></div>
<div class="b" style="left:3px;top:554px;width:12px;height:1px;background:#000;"></div>
<div class="b" style="left:14px;top:537px;width:1px;height:18px;background:#000;"></div>
<div class="b" style="left:15px;top:554px;width:765px;height:1px;background:#c0c0c0;"></div>
<span class="t" style="left:17px;top:539px;color:#000;transform:translateX(0.05px) scaleX(0.9044);">1.1.1.002.00001</span>
<span class="t" style="left:253px;top:539px;color:#000;transform:translateX(0.05px) scaleX(0.9069);">BANCO BANESPA S/A</span>
<span class="t" style="left:540px;top:539px;color:#000;transform:translateX(0.3px) scaleX(0.9271);">2</span>
<div class="b" style="left:3px;top:555px;width:11px;height:17px;background:#f0f0f0;border-top:1px solid #fff;border-left:1px solid #fff;"></div>
<div class="b" style="left:3px;top:572px;width:12px;height:1px;background:#000;"></div>
<div class="b" style="left:14px;top:555px;width:1px;height:18px;background:#000;"></div>
<div class="b" style="left:15px;top:572px;width:765px;height:1px;background:#c0c0c0;"></div>
<span class="t" style="left:17px;top:557px;color:#000;transform:translateX(0.05px) scaleX(0.9044);">1.1.1.002.00002</span>
<span class="t" style="left:253px;top:557px;color:#000;transform:translateX(0.05px) scaleX(0.8767);">BANCO CAIXA ECONOMICA FEDERAL</span>
<span class="t" style="left:540px;top:557px;color:#000;transform:translateX(0.55px) scaleX(0.8830);">3</span>
<div class="b" style="left:3px;top:573px;width:11px;height:17px;background:#f0f0f0;border-top:1px solid #fff;border-left:1px solid #fff;"></div>
<div class="b" style="left:3px;top:590px;width:12px;height:1px;background:#000;"></div>
<div class="b" style="left:14px;top:573px;width:1px;height:18px;background:#000;"></div>
<div class="b" style="left:15px;top:590px;width:765px;height:1px;background:#c0c0c0;"></div>
<span class="t" style="left:17px;top:575px;color:#000;transform:translateX(0.05px) scaleX(0.9044);">1.1.1.002.00003</span>
<span class="t" style="left:253px;top:575px;color:#000;transform:translateX(0.05px) scaleX(0.9150);">BANCO SANTANDER  S/A .</span>
<span class="t" style="left:537px;top:575px;color:#000;transform:translateX(0.05px) scaleX(0.9345);">13</span>
<div class="b" style="left:3px;top:591px;width:11px;height:17px;background:#f0f0f0;border-top:1px solid #fff;border-left:1px solid #fff;"></div>
<div class="b" style="left:3px;top:608px;width:12px;height:1px;background:#000;"></div>
<div class="b" style="left:14px;top:591px;width:1px;height:18px;background:#000;"></div>
<div class="b" style="left:15px;top:608px;width:765px;height:1px;background:#c0c0c0;"></div>
<span class="t" style="left:17px;top:593px;color:#000;transform:translateX(0.05px) scaleX(0.9014);">1.1.1.002.00004</span>
<span class="t" style="left:253px;top:593px;color:#000;transform:translateX(0.05px) scaleX(0.8952);">BANCO BRADESCO S/A.</span>
<span class="t" style="left:534px;top:593px;color:#000;transform:translateX(0.55px) scaleX(0.8954);">335</span>
<div class="b" style="left:250px;top:411px;width:1px;height:198px;background:#c0c0c0;"></div>
<div class="b" style="left:510px;top:411px;width:1px;height:198px;background:#c0c0c0;"></div>
<div class="b" style="left:576px;top:411px;width:1px;height:198px;background:#c0c0c0;"></div>
<div class="b" style="left:780px;top:393px;width:1px;height:231px;background:#ffffff;"></div>
<div class="b" style="left:781px;top:393px;width:16px;height:231px;background:#f0f0f0;"></div>
<div class="b" style="left:781px;top:410px;width:15px;height:17px;background:#cdcdcd;"></div>
<svg style="left:784.5px;top:398px" width="8" height="7" viewBox="0 0 8 7"><path d="M0.8 5.2 L4 2 L7.2 5.2" stroke="#606060" stroke-width="1.9" fill="none"/></svg>
<svg style="left:784.5px;top:611px" width="8" height="7" viewBox="0 0 8 7"><path d="M0.8 1.8 L4 5 L7.2 1.8" stroke="#606060" stroke-width="1.9" fill="none"/></svg>
<div class="b" style="left:3px;top:624px;width:777px;height:16px;background:#f0f0f0;"></div>
<div class="b" style="left:20px;top:624px;width:17px;height:15px;background:#cdcdcd;"></div>
<svg style="left:7.5px;top:628px" width="7" height="8" viewBox="0 0 7 8"><path d="M5.2 0.8 L2 4 L5.2 7.2" stroke="#606060" stroke-width="1.9" fill="none"/></svg>
<svg style="left:767.5px;top:628px" width="7" height="8" viewBox="0 0 7 8"><path d="M1.8 0.8 L5 4 L1.8 7.2" stroke="#606060" stroke-width="1.9" fill="none"/></svg>
<div class="b" style="left:781px;top:624px;width:16px;height:16px;background:#f0f0f0;"></div>
<div class="b" style="left:2px;top:640px;width:795px;height:1px;background:#ffffff;"></div>
<div class="b" style="left:2px;top:641px;width:795px;height:1px;background:#a0a0a0;"></div>
<div class="b" style="left:2px;top:642px;width:795px;height:38px;background:#f0f0f0;"></div>
<span class="t lcd" style="left:3px;top:646px;transform:translateX(0.05px) scaleX(0.9696);">Existem dados na memória para cópia, para limpar pressione a tecla F7.</span>
<div class="b" style="left:2px;top:661px;width:795px;height:1px;background:#d7d7d7;"></div>
<span class="t lcd" style="left:2px;top:665px;transform:translateX(0.8px) scaleX(0.9524);">Contas Cadastradas</span>
</body></html>
